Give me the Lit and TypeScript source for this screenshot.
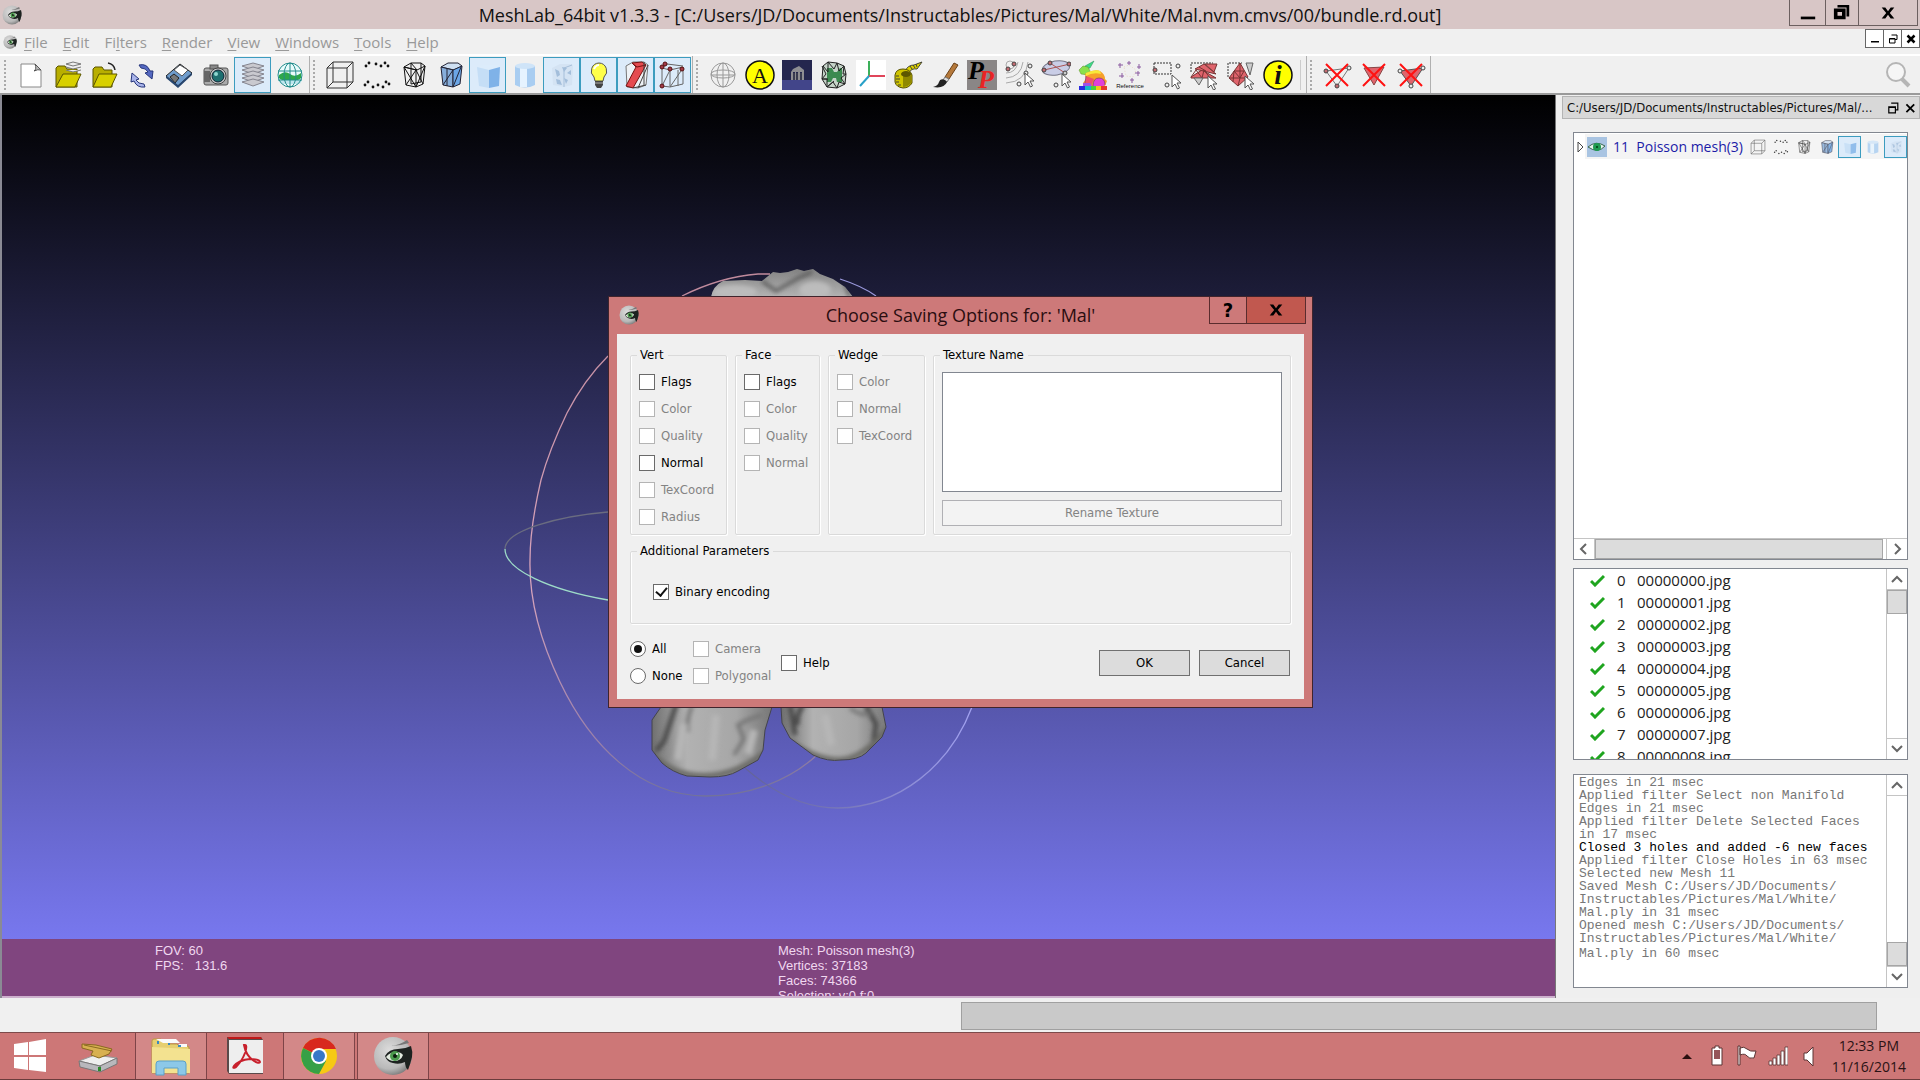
import { LitElement, html, svg, css, TemplateResult, SVGTemplateResult } from "lit";
import { customElement, property } from "lit/decorators.js";
import { classMap } from "lit/directives/class-map.js";

type Art = SVGTemplateResult;

const cursor = (x: number, y: number): Art => svg`
  <path d="M${x} ${y}v12l3-3 2.500 5 2-1-2.500-5h4z" fill="#fff" stroke="#555" stroke-width="1"/>`;
const dot = (x: number, y: number, fill = "#c46a70"): Art => svg`
  <circle cx="${x}" cy="${y}" r="2" fill="${fill}" stroke="#444" stroke-width="1"/>`;
const cross: Art = svg`<path d="M4 4l22 22M26 4L4 26" stroke="#f11" stroke-width="2" fill="none"/>`;

/* Toolbar drawings on a 30x30 grid */
const art: Record<string, Art> = {
  blank: svg`<path d="M5 4h14l6 6v17H5z" fill="#fff" stroke="#888"/><path d="M19 4q2 5-1 7 4-2 7-1z" fill="#bbb" stroke="#555"/>`,
  project: svg`
    <path d="M3 27V8l2-2h7l2 3h10v18z" fill="#b8ae00" stroke="#5a5500"/>
    <path d="M3 27l7-13h18l-6 13z" fill="#d8d000" stroke="#5a5500"/>
    <path d="M13 4l7-2 8 2-8 2zM13 7l7 2 8-2M13 10l7 2 8-2" fill="#eee" stroke="#777"/>`,
  folder: svg`
    <path d="M3 27V9l2-2h7l2 3h8v17z" fill="#b8ae00" stroke="#5a5500"/>
    <path d="M3 27l6-13h18l-6 13z" fill="#d8d000" stroke="#5a5500"/>
    <path d="M18 3q6 1 7 7" fill="none" stroke="#222" stroke-width="1.500"/>`,
  reload: svg`
    <path d="M12 5q8-2 11 6l3 0-1 8-7-6 3-1q-2-4-7-4z" fill="#5468c0" stroke="#26367c"/>
    <path d="M18 27q-8 1-11-6l-3 1 1-9 7 6-3 1q2 4 8 4z" fill="#a9b4ea" stroke="#26367c"/>`,
  save: svg`
    <path d="M2 16L16 4l12 9-14 13z" fill="#6f9ccc" stroke="#222"/>
    <path d="M10 10l6-5 8 5-6 6z" fill="#fff" stroke="#555"/>
    <path d="M6 17l4-3 5 4-4 5z" fill="#777" stroke="#222"/>
    <path d="M2 16l12 9 14-12v2L14 28 2 18z" fill="#27466f"/>`,
  camera: svg`
    <rect x="3" y="8" width="24" height="17" rx="2" fill="#aaa" stroke="#555"/>
    <rect x="9" y="5" width="8" height="4" fill="#888" stroke="#555"/>
    <rect x="3" y="11" width="6" height="11" fill="#666"/>
    <circle cx="17" cy="16" r="8" fill="#ccc" stroke="#444"/><circle cx="17" cy="16" r="6" fill="#1e6f70" stroke="#123"/>
    <circle cx="15" cy="14" r="2" fill="#8fd6d0"/>`,
  layers: svg`${[6, 10, 14, 18, 22].map((y) => svg`
    <path d="M4 ${y}l11-3 11 3-11 4z" fill="#c9c9cf" stroke="#85858f"/>`)}`,
  globe: svg`
    <circle cx="15" cy="15" r="12" fill="#e9fbfb"/>
    <path d="M4 15q6-5 11-1t11-1v5q-2 3-11 3T4 18z" fill="#2ea84a"/>
    <path d="M3 20h24l-2 4H6z" fill="#bfe6ee"/>
    <g fill="none" stroke="#228c8c"><circle cx="15" cy="15" r="12"/><ellipse cx="15" cy="15" rx="6" ry="12"/><path d="M3 11h24M3 20h24M15 3v24"/></g>`,
  bbox: svg`<path d="M2 8h20v20H2zM8 2h20v20H8zM2 8l6-6M22 8l6-6M2 28l6-6M22 28l6-6" fill="none" stroke="#333"/>`,
  points: svg`<g fill="#111">${[
    [4, 6], [7, 3], [14, 4], [19, 6], [23, 3], [26, 6], [3, 25], [6, 22], [11, 27], [16, 25], [21, 27], [24, 22], [27, 24]
  ].map(([x, y]) => svg`<circle cx="${x}" cy="${y}" r="1.400"/>`)}</g>`,
  wire: svg`<path d="M5 7l7-4h10l4 3-8 4zM5 7l2 18 10 2V10zM26 6l-2 18-7 3M7 25L17 10M5 7l12 20M17 10l7 14M26 6l-9 21M12 3v21M12 3l6 7M22 3v19M12 24l10-2" fill="none" stroke="#111"/>`,
  hidden: svg`
    <path d="M5 7l7-4h10l4 3-8 4z" fill="#cfe0f2" stroke="#223"/><path d="M5 7l2 18 10 2V10z" fill="#86aedb" stroke="#223"/>
    <path d="M26 6l-2 18-7 3V10z" fill="#6ba6e6" stroke="#223"/><path d="M7 25L17 10M11 8v18M17 27l8-20" fill="none" stroke="#223"/>`,
  flat: svg`
    <path d="M4 7l6-2h16l1 2-11 3z" fill="#dcecfb"/><path d="M4 7l12 3v18l-10-2z" fill="#c5def6"/><path d="M16 10l11-3-1 19-10 2z" fill="#7fb2e8"/>`,
  smooth: svg`
    <path d="M5 6v19q10 5 20 0V6z" fill="#a9cdf1"/><path d="M10 6v21h7V6z" fill="#e6f3ff"/><ellipse cx="15" cy="6" rx="10" ry="3" fill="#cfe4f8"/>`,
  texture: svg`
    <path d="M5 8l8-4h12l1 2-1 19-8 2-11-2z" fill="#d4e3f3"/>
    <path d="M8 9l4 2 1 4-3 2zM15 7l5 1-3 4zM20 13l4-3v5zM9 19l4 1 2 5-5-1zM17 18l4 2-2 4z" fill="#a3bedb"/><path d="M17 8l8-3M17 27V9" stroke="#a6bfda" fill="none"/>`,
  light: svg`
    <path d="M15 3a8 8 0 0 1 5 14l-1 4h-8l-1-4a8 8 0 0 1 5-14z" fill="#ffff4a" stroke="#555"/>
    <path d="M11 21h8v4l-2 3h-4l-2-3z" fill="#444"/><path d="M11 23h8" stroke="#aaa"/><path d="M10 9q2-4 5-4" fill="none" stroke="#fff" stroke-width="2"/>`,
  backface: svg`
    <path d="M5 6l7-4h11l4 3-2 20-8 3-11-1z" fill="#eef2f6" stroke="#777"/>
    <path d="M11 3l10-1 4 3-13 23-7-2L15 7z" fill="#e54b50" stroke="#711"/><path d="M11 3l5 4 9-2" fill="none" stroke="#711"/>
    <path d="M23 2v23M27 5l-10 23M12 28l13-3" fill="none" stroke="#444"/>`,
  edges: svg`
    <path d="M4 8l5-4 16 2M12 10v16M4 8v18l8 1 13-3V7l-13 3zM4 26l8-16M12 27L25 8M20 10v16" fill="none" stroke="#666"/>
    ${[[4, 7], [7, 4], [12, 9], [24, 9], [4, 26]].map(([x, y]) => svg`<circle cx="${x}" cy="${y}" r="2" fill="#a33a48" stroke="#511"/>`)}`,
  trackball: svg`<g fill="none" stroke="#999"><circle cx="15" cy="15" r="12"/><ellipse cx="15" cy="15" rx="6" ry="12"/><ellipse cx="15" cy="14" rx="12" ry="4"/><path d="M3 15h24M15 3v24"/></g>`,
  letterA: svg`<circle cx="15" cy="15" r="14" fill="#ff0" stroke="#111" stroke-width="1.500"/><text x="15" y="23" text-anchor="middle" font-family="Liberation Serif, serif" font-size="22" fill="#111">A</text>`,
  temple: svg`<rect width="30" height="30" fill="#24264e"/><path d="M0 20h30v10H0z" fill="#42458a"/>
    <path d="M9 12l2-3 6-3 5 4v2z" fill="#8e8e92"/><path d="M9 12h2v8H9zM13 12h1v8h-1zM16 12h2v8h-2zM20 12h2v8h-2z" fill="#8e8e92"/><path d="M11 13h2v7h-2zM14 13h2v7h-2zM18 13h2v7h-2z" fill="#3a3c50"/>`,
  mesh: svg`<path d="M4 6l5-4 9 1 7 3 2 8-1 10-8 4-10-1-5-8z" fill="#c6d4c9" stroke="#222"/>
    <path d="M8 8h5l2 4h3l3-4h2v14h-5l-1-4h-3l-2 4H8z" fill="#3c8a50"/>
    <path d="M4 6l5 6 0-10 6 7 3-6 2 8 5-5-1 8 3 0-5 4 4 6-6-2-2 6-4-6-6 5 0-8-5 0 4-5-4-8M8 27l7-6M3 19l6 0" fill="none" stroke="#222"/>`,
  axes: svg`<rect width="30" height="30" fill="#fff"/><path d="M13 16V1" stroke="#3cb05a" stroke-width="2"/><path d="M13 16h16" stroke="#e0455a" stroke-width="2"/><path d="M13 16L4 26" stroke="#28a0c8" stroke-width="2"/>`,
  tape: svg`
    <path d="M12 11q3-6 9-6l8-3-5 7q-6-1-8 4z" fill="#ddd200" stroke="#443"/><path d="M17 6l2 3M20 5l2 3M23 4l1 3" stroke="#443"/>
    <path d="M2 15q1-6 8-6t9 6v8q-3 5-9 5-7-1-8-6z" fill="#cfc400" stroke="#554f00"/>
    <path d="M10 14q6-2 8 2v7q-3 4-8 4z" fill="#8f8800"/><ellipse cx="13" cy="14" rx="5" ry="3" fill="#5c5700"/><path d="M3 16h3M3 19h4M3 22h3M5 25h3" stroke="#443"/>`,
  brush: svg`<path d="M24 3l4 2-9 14-4-2z" fill="#b5793b" stroke="#6b4118"/><path d="M15 17l4 2-2 3-4-2z" fill="#ddd" stroke="#777"/><path d="M3 27q5-1 6-5t6-2l2 2q-3 7-14 5z" fill="#222"/>`,
  pp: svg`<rect width="30" height="30" fill="#8a8686"/>
    <text x="1" y="19" font-family="Liberation Serif, serif" font-size="26" font-weight="700" font-style="italic" fill="#000">P</text>
    <text x="11" y="28" font-family="Liberation Serif, serif" font-size="26" font-weight="700" font-style="italic" fill="#e82424">P</text>`,
  georef: svg`<g fill="none" stroke="#aaa"><circle cx="6" cy="5" r="4"/><path d="M2 13q10 0 12-11M2 18Q17 17 19 2M2 23Q22 22 24 2"/></g>
    ${dot(10, 4)}${dot(4, 9)}${dot(26, 6, "#eee")}${dot(22, 13, "#eee")}${dot(15, 24, "#eee")}${cursor(21, 13)}`,
  plane: svg`<ellipse cx="15" cy="8" rx="14" ry="7" transform="rotate(-10 15 8)" fill="#c9cde6" stroke="#778"/><path d="M3 10L29 4M9 3l15 10" stroke="#a55"/>
    ${dot(9, 3)}${dot(3, 10)}${dot(28, 4)}${dot(24, 13, "#ccc")}${dot(15, 25, "#eee")}${cursor(21, 14)}`,
  bunny: svg`
    <path d="M7 6l9-5-4 7-4 1z" fill="#3ddc84" stroke="#2a8a5a" stroke-width=".5"/>
    <path d="M1 10l4-4 5 1 2 4-2 4-7-1z" fill="#8be04a" stroke="#5a8a2a" stroke-width=".5"/>
    <path d="M8 13q9-4 14-2 5 3 5 8l2 2-2 5H6l-1-3 3-4-1-5z" fill="#f6a02a"/>
    <path d="M8 13q9-4 14-2l1 3q-8-2-15 2z" fill="#f8e83a"/><path d="M8 16l-1 8 6 2 3-7z" fill="#f0506a"/>
    <path d="M15 26q0-8 6-8t6 7l-2 1z" fill="#e040d8"/><path d="M5 23h7l2 3H5z" fill="#a050e8"/>
    <path d="M15 26q0-8 6-8t6 7M8 16l-1 7" fill="none" stroke="#803a6a" stroke-width=".7"/>
    <path d="M1 26h6v4H1z" fill="#2a2ae0"/><path d="M7 26h6v4H7z" fill="#18b8c8"/><path d="M13 26h5v4h-5z" fill="#4ad03a"/><path d="M18 26h5v4h-5z" fill="#f4c81a"/><path d="M23 26h6v4h-6z" fill="#e83a2a"/>`,
  reference: svg`<path d="M5 3v5M3 5h5M14 1v4M12 3h4M24 4v5M22 7h4M7 13v5M4 16h5M23 11v5M20 13h5M17 18v5M15 20h4" stroke="#8a5aa0" fill="none"/>
    <path d="M9 7l5-2 7 5-3 7-7-1z" fill="none" stroke="#e8d8c0" stroke-dasharray="1 2"/>
    <text x="15" y="28" text-anchor="middle" font-family="Liberation Sans, sans-serif" font-size="6" fill="#111">Reference</text>`,
  selvert: svg`<rect x="2" y="3" width="17" height="11" fill="none" stroke="#333" stroke-dasharray="2 1"/>${dot(3, 10)}${dot(26, 6, "#eee")}${dot(15, 25, "#eee")}${cursor(20, 15)}`,
  selface: svg`<path d="M2 12V3h22" fill="none" stroke="#333" stroke-dasharray="2 1"/>
    <path d="M2 17l11-7 14 8H2z" fill="#e0646c" stroke="#733"/><path d="M6 9l9-5 12 10z" fill="#e0646c" stroke="#733"/><path d="M16 4h12l-3 8z" fill="#e0646c" stroke="#733"/>
    <path d="M2 17l5-7 6 8 2-8 6 8M10 7l7 4" stroke="#733" fill="none"/><path d="M5 18h9l-4 7z" fill="#ccc" stroke="#666"/>${cursor(19, 16)}`,
  selconn: svg`<path d="M2 17V3h14" fill="none" stroke="#333" stroke-dasharray="2 1"/>
    <path d="M14 3l8 14-10 9-9-8z" fill="#e0646c" stroke="#733"/><path d="M14 3v15l-2 8M3 18h18M8 11l6 7 4-7zM8 11l-1 11" stroke="#733" fill="none"/><path d="M20 3h7l-3 12z" fill="#ccc" stroke="#666"/>${cursor(19, 16)}`,
  info: svg`<circle cx="15" cy="15" r="14" fill="#ff0" stroke="#111" stroke-width="1.500"/><text x="15" y="24" text-anchor="middle" font-family="Liberation Serif, serif" font-size="27" font-weight="700" font-style="italic" fill="#111">i</text>`,
  delvert: svg`<path d="M4 11l11 15L27 8z" fill="none" stroke="#777"/>${cross}${dot(4, 11)}${dot(15, 26)}${dot(27, 8, "#eee")}`,
  delface: svg`<path d="M5 8l20-1-10 18z" fill="#e0646c" stroke="#844"/>${cross}`,
  delboth: svg`<path d="M4 11L27 8 15 26z" fill="#e0646c" stroke="#555"/>${cross}${dot(4, 11, "#eee")}${dot(15, 26, "#eee")}${dot(27, 8, "#eee")}`
};

const icon = (name: string, cls = "ico") => html`<svg class=${cls} viewBox="0 0 30 30" aria-hidden="true">${art[name]}</svg>`;

const eye = (cls: string): TemplateResult => html`
  <svg class=${cls} viewBox="0 0 40 40" aria-hidden="true">
    <defs>
      <radialGradient id="ball" cx=".4" cy=".35" r=".7"><stop offset="0" stop-color="#dcdcdc"/><stop offset=".7" stop-color="#b9b9b9"/><stop offset="1" stop-color="#777"/></radialGradient>
    </defs>
    <circle cx="20" cy="20" r="19" fill="url(#ball)"/>
    <path d="M18 10q9-1 16-6l2 3q-9 3-18 3z" fill="#777"/>
    <path d="M12 20q4-7 13-7 7 0 13-3 2 6 1 11-2 8-4 13-3-3-3-8-6 3-12 1-6-1-8-7z" fill="#1d2220"/>
    <path d="M13 21q4-5 10-5 5 0 7 3-2 6-9 6-5 0-8-4z" fill="#e3ebe0"/>
    <circle cx="22" cy="20" r="5" fill="#4c9a4e"/><circle cx="22" cy="20" r="2" fill="#0c1a0e"/><circle cx="24" cy="18" r="1" fill="#fff"/>
  </svg>`;

const glyph = {
  min: svg`<path d="M2 14h16v3H2z"/>`,
  restore: svg`<path d="M5 1h13v13h-3V4H5zM1 5h13v12H1zM5 9v4h5V9z" fill-rule="evenodd"/>`,
  close: svg`<path d="M3 4h4l3 4 3-4h4l-5 6 5 6h-4l-3-4-3 4H3l5-6z"/>`
};
const mark = (g: Art, cls: string) => html`<svg class=${cls} viewBox="0 0 20 20" aria-hidden="true">${g}</svg>`;

const base = css`
  * { box-sizing: border-box; }
  button { font: inherit; color: inherit; margin: 0; padding: 0; border: 0; background: none; }
  svg { display: block; flex: none; }
`;

@customElement("tool-strip")
class ToolStrip extends LitElement {
  static styles = [base, css`
    :host { display: flex; height: 41px; background: #f0f0f0; border-top: 2px solid #fff; border-bottom: 2px solid #9a9a9a; }
    .group { display: flex; align-items: center; border-left: 1px solid #b0b0b0; margin-right: 1px; }
    .group:first-of-type { border-left-color: #f0f0f0; }
    .grip { width: 11px; height: 32px; background: radial-gradient(circle, #aaa 1px, transparent 1px) 2px 0 / 4px 4px repeat-y; }
    .tool { width: 37px; height: 36px; display: grid; place-items: center; border: 1px solid transparent; }
    .on { background: #dcebfa; border-color: #3c9cbf; }
    .ico { width: 30px; height: 30px; }
    .tail { width: 9px; height: 30px; background: linear-gradient(#ccc, #ccc) 4px 0 / 1px 100% no-repeat; }
    .end { flex: 1; border-left: 1px solid #b0b0b0; display: flex; align-items: center; justify-content: flex-end; padding-right: 8px; }
    .find { width: 28px; height: 28px; }
  `];
  groups: { names: string[]; on?: string[]; tail?: boolean }[] = [
    { names: ["blank", "project", "folder", "reload", "save", "camera", "layers", "globe"], on: ["layers"] },
    { names: ["bbox", "points", "wire", "hidden", "flat", "smooth", "texture", "light", "backface", "edges"], on: ["flat", "texture", "light", "backface", "edges"] },
    { names: ["trackball", "letterA", "temple", "mesh", "axes", "tape", "brush", "pp", "georef", "plane", "bunny", "reference", "selvert", "selface", "selconn", "info"], tail: true },
    { names: ["delvert", "delface", "delboth"] }
  ];
  render() {
    return html`
      ${this.groups.map((g) => html`
        <div class="group"><span class="grip"></span>
          ${g.names.map((n) => html`<button class=${classMap({ tool: true, on: !!g.on?.includes(n) })} aria-label=${n}>${icon(n)}</button>`)}
          ${g.tail ? html`<span class="tail"></span>` : ""}
        </div>`)}
      <div class="end"><button aria-label="Search">
        <svg class="find" viewBox="0 0 28 28"><circle cx="12" cy="11" r="9" fill="#f6f6f6" stroke="#b5b5b5" stroke-width="2"/><path d="M18 18l7 7" stroke="#b5b5b5" stroke-width="4"/></svg>
      </button></div>`;
  }
}

@customElement("scroll-bar")
class ScrollBar extends LitElement {
  @property({ type: Boolean, reflect: true }) horizontal = false;
  @property({ type: Number }) before = 0;
  @property({ type: Number }) thumb = 0;
  @property({ type: Number }) after = 0;
  static styles = [base, css`
    :host { display: flex; flex-direction: column; width: 21px; flex: none; background: #fff; border-left: 1px solid #c4c4c4; }
    :host([horizontal]) { flex-direction: row; width: auto; height: 21px; border-left: 0; border-top: 1px solid #c4c4c4; }
    .end { flex: none; width: 20px; height: 21px; display: grid; place-items: center; border: 0 solid #c4c4c4; border-width: 0 0 1px; }
    .end:last-child { border-width: 1px 0 0; }
    :host([horizontal]) .end { height: 20px; width: 21px; border-width: 0 1px 0 0; }
    :host([horizontal]) .end:last-child { border-width: 0 0 0 1px; }
    .arrow { width: 12px; height: 12px; fill: none; stroke: #666; stroke-width: 2; }
    .thumb { background: #dcdcdc; border: 1px solid #a6a6a6; }
  `];
  render() {
    const h = this.horizontal;
    return html`
      <button class="end" aria-label="Back"><svg class="arrow" viewBox="0 0 12 12"><path d=${h ? "M8 1L3 6l5 5" : "M1 9l5-5 5 5"} /></svg></button>
      <span style="flex:${this.before} 1 0"></span>
      <span class="thumb" style="flex:${this.thumb} 1 0"></span>
      <span style="flex:${this.after} 1 0"></span>
      <button class="end" aria-label="Forward"><svg class="arrow" viewBox="0 0 12 12"><path d=${h ? "M4 1l5 5-5 5" : "M1 3l5 5 5-5"} /></svg></button>`;
  }
}

@customElement("mesh-view")
class MeshView extends LitElement {
  static styles = [base, css`
    :host { display: flex; flex-direction: column; justify-content: flex-end; position: relative; overflow: hidden; min-width: 0; min-height: 0;
      background: linear-gradient(#000, #8080ff); border-left: 2px solid #8a8a94; border-right: 1px solid #777; }
    .scene { position: absolute; left: -2px; top: 0; width: 100%; height: 100%; }
    .info { position: relative; height: 59px; overflow: hidden; background: #80457f; border-bottom: 2px solid #cdb0cd; padding: 4px 0 0 153px;
      display: grid; grid-template-columns: 623px 1fr; font: 13px/15px "Liberation Sans", sans-serif; color: #f0d8f0; white-space: pre; }
    .col { height: 60px; }
  `];
  render() {
    return html`
      <svg class="scene" viewBox="0 95 1556 903" preserveAspectRatio="xMinYMin slice">
        <defs>
          <linearGradient id="stone" x1="0" y1="0" x2="1" y2="0"><stop offset="0" stop-color="#6c6c6c"/><stop offset=".3" stop-color="#b2b2b2"/><stop offset=".7" stop-color="#a6a6a6"/><stop offset="1" stop-color="#747474"/></linearGradient>
          <linearGradient id="head" x1="0" y1="0" x2="0" y2="1"><stop offset="0" stop-color="#7c7c7c"/><stop offset="1" stop-color="#b8b8b8"/></linearGradient>
          <linearGradient id="ringA" x1="0" y1="0" x2="0" y2="1"><stop offset="0" stop-color="#c08a9c"/><stop offset=".6" stop-color="#d8a4bc"/><stop offset=".9" stop-color="#9a80a8"/><stop offset="1" stop-color="#72729a"/></linearGradient>
          <linearGradient id="ringB" x1="0" y1="0" x2="1" y2="0"><stop offset="0" stop-color="#62629a"/><stop offset=".5" stop-color="#7c7cc0"/><stop offset="1" stop-color="#a2a2f0"/></linearGradient>
          <filter id="soft"><feGaussianBlur stdDeviation="2"/></filter>
          <clipPath id="feet"><path d="M661 707L652 720V750L662 763Q672 772 687 776L710 777Q728 777 738 771L758 760 763 750 765 730 772 707zM781 707L782 723 790 738 813 755Q828 762 841 760 858 760 866 753L882 737 886 727 882 707z"/></clipPath>
          <clipPath id="top"><path d="M711 297Q713 286 723 281L745 280 762 281 773 272 780 273 788 272 797 269 804 271 813 269 820 274 833 279 845 287 853 297z"/></clipPath>
        </defs>
        <g fill="none" stroke-width="1.300">
          <path stroke="url(#ringA)" d="M682 296Q720 277 758 274H770M817 755C790 780 750 796 706 796 640 796 590 745 560 682 540 640 529 600 530 560 530 540 534 510 541 480 547 458 554 440 567 413 580 388 592 372 608 356"/>
          <path stroke="#9a98dc" d="M840 279Q862 286 876 296"/>
          <path stroke="url(#ringB)" d="M972 707C950 765 900 807 838 808 800 808 770 790 745 768"/>
          <path stroke="#6a6c80" d="M608 512C560 516 505 530 505 549"/>
          <path stroke="#9edcc8" d="M505 549C505 570 550 590 608 600"/>
        </g>
        <g clip-path="url(#top)">
          <rect x="705" y="265" width="150" height="35" fill="url(#head)"/>
          <g filter="url(#soft)"><ellipse cx="735" cy="292" rx="22" ry="7" fill="#bcbcbc"/><ellipse cx="815" cy="290" rx="16" ry="9" fill="#bcbcbc"/>
          <path d="M762 281l14 10 24-14 12-5M845 284l5 13" stroke="#555" stroke-width="3" fill="none"/></g>
        </g>
        <g clip-path="url(#feet)">
          <rect x="650" y="700" width="124" height="80" fill="url(#stone)"/><rect x="780" y="700" width="110" height="65" fill="url(#stone)"/>
          <g filter="url(#soft)" fill="none"><path d="M676 705l-12 36-8 10M790 705l5 30M803 705q-8 12-5 20M866 706l10 18-4 30" stroke="#4c4c4c" stroke-width="5"/>
          <path d="M692 706q-6 14-4 26M762 715q-14 4-24 10l6 14-10 16M850 708q10 8 20 6" stroke="#777" stroke-width="4"/>
          <path d="M652 754q20 22 52 22t62-24M790 742q30 20 52 18t46-32" stroke="#6a6a66" stroke-width="6"/>
          <path d="M684 724l-6 36M716 715l-4 45M825 715l6 30M754 730l-6 24" stroke="#b6b6b6" stroke-width="8"/></g>
        </g>
        <path d="M652 750L662 763Q672 772 687 776L710 777Q728 777 738 771L758 760 763 750 765 730 772 707M781 707L782 723 790 738 813 755Q828 762 841 760 858 760 866 753L882 737 886 727 882 707M661 707L652 720V750" fill="none" stroke="#44444c"/>
      </svg>
      <div class="info"><div class="col">FOV: 60
FPS:   131.6</div><div class="col">Mesh: Poisson mesh(3)
Vertices: 37183
Faces: 74366
Selection: v:0 f:0</div></div>`;
  }
}

@customElement("side-dock")
class SideDock extends LitElement {
  static styles = [base, css`
    :host { display: flex; flex-direction: column; min-width: 0; min-height: 0; background: #efefef; padding: 1px 0 10px 6px; font: 15px/22px "Open Sans", "Noto Sans", sans-serif; }
    .bar { display: flex; align-items: center; height: 23px; padding: 0 3px 0 4px; background: #d8d8d8; border: 1px solid #b4b4b4; font: 13px/21px "DejaVu Sans Condensed", "DejaVu Sans", sans-serif; color: #111; margin-bottom: 13px; }
    .path { flex: 1; min-width: 0; white-space: nowrap; }
    .mini { width: 12px; height: 12px; margin-left: 5px; }
    .box { margin: 0 12px 8px 11px; border: 1px solid #828790; background: #fff; min-height: 0; }
    .tree { flex: 1; display: flex; flex-direction: column; }
    .node { display: flex; align-items: center; height: 25px; padding-left: 3px; margin-top: 1px; }
    .twist { width: 8px; height: 12px; }
    .row { flex: 1; height: 25px; display: flex; align-items: center; background: #f4f4f4; padding-left: 2px; color: #1c1ca8; }
    .eye { width: 20px; height: 20px; background: #a9c4e2; }
    .name { flex: 1; padding-left: 6px; white-space: nowrap; font-size: 14px; }
    .tool { width: 23px; height: 22px; display: grid; place-items: center; border: 1px solid transparent; }
    .on { background: #dcebfa; border-color: #3c9cbf; }
    .ico { width: 16px; height: 16px; opacity: .8; }
    .fill { flex: 1; }
    .list { height: 192px; display: flex; overflow: hidden; margin-bottom: 14px; }
    .items { flex: 1; margin: 0; padding: 0 0 0 16px; list-style: none; }
    .item { display: flex; align-items: center; height: 22px; color: #222; }
    .tick { width: 15px; height: 13px; }
    .num { width: 20px; margin-left: 12px; }
    .log { height: 214px; display: flex; margin-bottom: 0; }
    .lines { flex: 1; margin: 0; padding: 1px 0 0 5px; font: 13px/13px "Liberation Mono", monospace; color: #777; }
    .strong { color: #000; }
    .last { display: block; padding-top: 2px; }
  `];
  render() {
    const files = [0, 1, 2, 3, 4, 5, 6, 7, 8];
    const tools = ["bbox", "points", "wire", "hidden", "flat", "smooth", "texture"];
    return html`
      <div class="bar"><span class="path">C:/Users/JD/Documents/Instructables/Pictures/Mal/...</span>
        <button aria-label="Float">${mark(svg`<path d="M7 2h11v11h-4M3 8h11v10H3zM3 9h11" fill="none" stroke="#000" stroke-width="2"/>`, "mini")}</button>
        <button aria-label="Close dock">${mark(svg`<path d="M4 4l13 13M17 4L4 17" stroke="#000" stroke-width="3"/>`, "mini")}</button>
      </div>
      <div class="box tree">
        <div class="node"><svg class="twist" viewBox="0 0 8 12"><path d="M1 1l5 5-5 5z" fill="#fff" stroke="#444"/></svg>
          <div class="row">
            <svg class="eye" viewBox="0 0 20 20"><path d="M1 10q8-7 17-1-7 8-17 1z" fill="#e8f4ee" stroke="#3a6650"/><circle cx="10" cy="10" r="4" fill="#1e9a50"/><circle cx="10" cy="10" r="1" fill="#031"/></svg>
            <span class="name">11&nbsp; Poisson mesh(3)</span>
            ${tools.map((n) => html`<button class=${classMap({ tool: true, on: n === "flat" || n === "texture" })} aria-label=${n}>${icon(n)}</button>`)}
          </div>
        </div>
        <div class="fill"></div>
        <scroll-bar horizontal .before=${0} .thumb=${290} .after=${3}></scroll-bar>
      </div>
      <div class="box list">
        <ul class="items">${files.map((n) => html`<li class="item">
          <svg class="tick" viewBox="0 0 15 13"><path d="M1 7l4 4 9-9" fill="none" stroke="#1fa51f" stroke-width="3"/></svg>
          <span class="num">${n}</span><span>0000000${n}.jpg</span></li>`)}</ul>
        <scroll-bar .before=${0} .thumb=${22} .after=${127}></scroll-bar>
      </div>
      <div class="box log">
        <pre class="lines">Edges in 21 msec
Applied filter Select non Manifold
Edges in 21 msec
Applied filter Delete Selected Faces
in 17 msec
<span class="strong">Closed 3 holes and added -6 new faces</span>
Applied filter Close Holes in 63 msec
Selected new Mesh 11
Saved Mesh C:/Users/JD/Documents/
Instructables/Pictures/Mal/White/
Mal.ply in 31 msec
Opened mesh C:/Users/JD/Documents/
Instructables/Pictures/Mal/White/
<span class="last">Mal.ply in 60 msec</span></pre>
        <scroll-bar .before=${149} .thumb=${22} .after=${0}></scroll-bar>
      </div>`;
  }
}

interface Opt { label: string; off?: boolean; checked?: boolean; }

@customElement("save-dialog")
class SaveDialog extends LitElement {
  static styles = [base, css`
    :host { display: block; background: #cd7979; border: 1px solid #40242c; padding: 0 8px 8px; font: 13px/16px "DejaVu Sans Condensed", "DejaVu Sans", sans-serif; color: #000; }
    .head { display: flex; height: 37px; align-items: flex-start; }
    .logo { width: 20px; height: 20px; margin: 8px 0 0 2px; }
    .title { flex: 1; margin: 0; padding-left: 73px; text-align: center; font-family: "Open Sans", "Noto Sans", sans-serif; font-size: 18px; font-weight: 400; line-height: 37px; color: #2a0d10; }
    .help, .shut { height: 27px; border: 1px solid #5a2c2e; border-top: 0; display: grid; place-items: center; }
    .help { width: 37px; border-right: 0; font-size: 20px; font-weight: 700; line-height: 24px; }
    .shut { width: 60px; background: #c1584f; margin-right: -2px; }
    .x { width: 18px; height: 18px; }
    .body { background: #f0f0f0; padding: 13px 13px 15px; }
    .grid { display: grid; grid-template-columns: 97px 85px 97px 1fr; gap: 8px; }
    fieldset { margin: 0; min-width: 0; border: 1px solid #dadada; border-radius: 2px; box-shadow: inset 1px 0 #fff, 1px 1px #fff; padding: 11px 8px 9px; display: flex; flex-direction: column; gap: 11px; }
    legend { padding: 0 4px 0 3px; margin-left: -2px; line-height: 16px; white-space: nowrap; }
    .names { gap: 8px; padding-top: 9px; padding-bottom: 8px; }
    .textures { flex: 1; margin: 0; border: 1px solid #828790; background: #fff; }
    .wide { grid-column: 1 / -1; padding: 25px 22px 23px; }
    .wide legend { margin-left: -16px; }
    .opt { display: flex; align-items: center; gap: 6px; height: 16px; white-space: nowrap; }
    .off { color: #838383; }
    input { appearance: none; flex: none; width: 16px; height: 16px; margin: 0; border: 1px solid #6a6a6a; background: #fff; display: grid; place-items: center; }
    input:disabled { border-color: #b4b4b4; }
    input[type="checkbox"]:checked::after { content: ""; width: 5px; height: 9px; margin-top: -3px; border: solid #111; border-width: 0 2px 2px 0; rotate: 40deg; }
    input[type="radio"] { border-radius: 50%; }
    input[type="radio"]:checked::after { content: ""; width: 8px; height: 8px; border-radius: 50%; background: #111; }
    .foot { display: flex; align-items: center; margin-top: 17px; padding-right: 1px; }
    .pair { display: grid; gap: 11px; }
    .radios { width: 63px; }
    .kinds { width: 88px; }
    .gap { flex: 1; }
    .btn { height: 26px; border: 1px solid #707070; background: #dcdcdc; }
    .btn:disabled { border-color: #b0b0b4; background: #f3f3f3; color: #838383; }
    .act { width: 91px; margin-left: 9px; }
  `];
  opt(o: Opt, type = "checkbox") {
    return html`<label class=${classMap({ opt: true, off: !!o.off })}><input type=${type} name=${type === "radio" ? "range" : o.label} ?disabled=${!!o.off} ?checked=${!!o.checked} />${o.label}</label>`;
  }
  render() {
    const off = (label: string): Opt => ({ label, off: true });
    const groups: [string, Opt[]][] = [
      ["Vert", [{ label: "Flags" }, off("Color"), off("Quality"), { label: "Normal" }, off("TexCoord"), off("Radius")]],
      ["Face", [{ label: "Flags" }, off("Color"), off("Quality"), off("Normal")]],
      ["Wedge", [off("Color"), off("Normal"), off("TexCoord")]]
    ];
    return html`
      <div class="head">${eye("logo")}<h2 class="title">Choose Saving Options for: 'Mal'</h2>
        <button class="help">?</button><button class="shut" aria-label="Close">${mark(glyph.close, "x")}</button></div>
      <div class="body">
        <div class="grid">
          ${groups.map(([t, os]) => html`<fieldset><legend>${t}</legend>${os.map((o) => this.opt(o))}</fieldset>`)}
          <fieldset class="names"><legend>Texture Name</legend>
            <div class="textures" role="listbox" aria-label="Texture Name"></div>
            <button class="btn" disabled>Rename Texture</button></fieldset>
          <fieldset class="wide"><legend>Additional Parameters</legend>${this.opt({ label: "Binary encoding", checked: true })}</fieldset>
        </div>
        <div class="foot">
          <div class="pair radios">${this.opt({ label: "All", checked: true }, "radio")}${this.opt({ label: "None" }, "radio")}</div>
          <div class="pair kinds">${this.opt(off("Camera"))}${this.opt(off("Polygonal"))}</div>
          ${this.opt({ label: "Help" })}
          <span class="gap"></span>
          <button class="btn act">OK</button><button class="btn act">Cancel</button>
        </div>
      </div>`;
  }
}

@customElement("task-bar")
class TaskBar extends LitElement {
  static styles = [base, css`
    :host { display: flex; height: 48px; align-items: stretch; background: #cd7777; border-top: 1px solid #7c4a4a; border-bottom: 1px solid #6a3c3c; font: 14px/21px "Open Sans", "Noto Sans", sans-serif; color: #2a1214; }
    .task { width: 74px; display: grid; place-items: center; border: 0 solid #7e4448; }
    .start { width: 60px; } .drive { width: 75px; }
    .open { background: #d38888; border-width: 0 1px; width: 72px; }
    .closed { width: 76px; }
    .next { margin-left: 2px; }
    .pic { width: 40px; height: 40px; }
    .gap { flex: 1; }
    .tray { display: flex; align-items: center; gap: 8px; padding-right: 14px; }
    .sym { width: 22px; height: 22px; }
    .clock { text-align: center; padding-left: 6px; }
    .line { display: block; }
  `];
  render() {
    return html`
      <button class="task start" aria-label="Start"><svg class="pic" viewBox="0 0 40 40"><path d="M4 8l14-2v13H4zM19 6l17-3v16H19zM4 21h14v13L4 32zM19 21h17v15l-17-2z" fill="#fff"/></svg></button>
      <button class="task drive" aria-label="Drive"><svg class="pic" viewBox="0 0 40 40">
        <path d="M1 25l16-6 22 3-17 8z" fill="#eee" stroke="#999"/><path d="M1 25l21 5v6L2 31zM39 22l-17 8v6l17-8z" fill="#b8b8bc" stroke="#777"/><path d="M20 31l3 0v4h-3z" fill="#2a8a2a"/>
        <path d="M4 8l14 1 16 4-3 5-10 4-8-3 2-4-11-3z" fill="#d8b050" stroke="#8a6a20"/><path d="M6 9l28 6" stroke="#8a6a20"/></svg></button>
      <button class="task open" aria-label="Explorer"><svg class="pic" viewBox="0 0 40 40">
        <path d="M1 37V5q0-2 2-2h7l2 3h4l2 2h8l2 2h8q2 0 2 2v25z" fill="#e6cf70" stroke="#b89a40"/><path d="M5 3h20l4 4H12zM28 8h8v3h-9z" fill="#fafafa"/><path d="M6 5h2v3H6zM17 7h2v2h-2zM27 9h3v2h-3z" fill="#3a8ac0"/>
        <path d="M1 37V11l38 2v24z" fill="#f3e290"/><path d="M5 39V28q0-3 3-3h24q3 0 3 3v11h-8v-7H13v7z" fill="#8cc8e8" stroke="#5aa0c8"/></svg></button>
      <button class="task closed" aria-label="Reader"><svg class="pic" viewBox="0 0 40 40">
        <path d="M2 1h34l2 3v34H4l-2-3z" fill="#5a4a4a"/><path d="M2 1h34l1 2H4z" fill="#c01818"/><rect x="4" y="4" width="34" height="33" fill="#eee"/>
        <path d="M19 9q4-1 1 8-3 8-9 14-4 2-2-1 5-6 16-7 10 0 10 3-1 2-6-1-8-5-10-16z" fill="none" stroke="#c8202c" stroke-width="2"/></svg></button>
      <button class="task open" aria-label="Chrome"><svg class="pic" viewBox="0 0 40 40">
        <circle cx="20" cy="20" r="18" fill="#f6c915"/><path d="M20 20L4 12A18 18 0 0 1 37 13H20z" fill="#d8281e"/><path d="M4 12A18 18 0 0 0 20 38l7-13-7-5z" fill="#36a046"/>
        <circle cx="20" cy="20" r="8" fill="#fff"/><circle cx="20" cy="20" r="6" fill="#3878c8"/></svg></button>
      <button class="task open next" aria-label="MeshLab">${eye("pic")}</button>
      <span class="gap"></span>
      <div class="tray">
        <svg class="sym" viewBox="0 0 22 22"><path d="M6 14l5-5 5 5z" fill="#2a1010"/></svg>
        <svg class="sym" viewBox="0 0 22 22"><path d="M9 3V1h4v2h3v17H6V3z" fill="#fff" stroke="#5a3434"/><path d="M8 5h6v9H8z" fill="#94565a"/></svg>
        <svg class="sym" viewBox="0 0 22 22"><path d="M2 1h2v19H2zM4 3q4-2 7 1t9 2l-2 7q-5 1-7-2t-7-1z" fill="#fff" stroke="#5a3434"/></svg>
        <svg class="sym" viewBox="0 0 22 22"><path d="M3 16h3v4H3zM7 13h3v7H7zM11 10h3v10h-3zM15 6h3v14h-3zM19 2h3v18h-3z" fill="#fff" stroke="#5a3434" stroke-width=".8"/></svg>
        <svg class="sym" viewBox="0 0 22 22"><path d="M8 8h3l6-6v19l-6-6H8z" fill="#fff" stroke="#5a3434"/></svg>
        <div class="clock"><span class="line">12:33 PM</span><span class="line">11/16/2014</span></div>
      </div>`;
  }
}

@customElement("app-root")
class AppRoot extends LitElement {
  static styles = [base, css`
    :host { display: grid; grid-template-rows: auto auto auto 1fr auto auto; min-height: 100vh; position: relative; overflow: hidden; background: #f0f0f0; font-family: "Open Sans", "Noto Sans", sans-serif; }
    .title { display: grid; grid-template-columns: 131px 1fr 131px; height: 29px; background: #d8c6c6; }
    .logo { width: 20px; height: 20px; margin: 5px 0 0 2px; }
    .caption { margin: 0; text-align: center; font-size: 18px; font-weight: 400; line-height: 30px; color: #111; white-space: nowrap; }
    .sys { display: flex; height: 26px; border: 1px solid #6c6060; border-top: 0; margin-right: 2px; }
    .sb { flex: 36; display: grid; place-items: center; }
    .sb + .sb { flex: 33; border-left: 1px solid #6c6060; }
    .sb + .big { flex: 59; }
    .g { width: 18px; height: 18px; }
    .menu { display: flex; height: 25px; align-items: flex-start; padding-left: 3px; font-size: 15px; line-height: 27px; color: #999; }
    .small { width: 14px; height: 14px; margin: 6px 7px 0 0; }
    .entry { margin-right: 15px; line-height: 27px; }
    u { text-underline-offset: 2px; }
    .mdi { margin-left: auto; display: flex; height: 19px; border: 1px solid #666; background: #fff; }
    .mb { width: 17px; display: grid; place-items: center; }
    .mb + .mb { width: 18px; border-left: 1px solid #666; }
    .m { width: 10px; height: 10px; }
    .main { display: grid; grid-template-columns: 1fr 364px; min-height: 0; }
    .status { height: 34px; padding: 4px 43px 2px 0; display: flex; justify-content: flex-end; }
    .progress { width: 916px; border: 1px solid #a0a0a0; background: #c9c9c9; }
    .dialog { position: absolute; top: 296px; left: calc(50% - 352px); width: 705px; }
  `];
  menu(s: string, at = 0) {
    return html`<button class="entry">${s.slice(0, at)}<u>${s[at]}</u>${s.slice(at + 1)}</button>`;
  }
  render() {
    return html`
      <header class="title">${eye("logo")}
        <h1 class="caption">MeshLab_64bit v1.3.3 - [C:/Users/JD/Documents/Instructables/Pictures/Mal/White/Mal.nvm.cmvs/00/bundle.rd.out]</h1>
        <div class="sys"><button class="sb" aria-label="Minimize">${mark(glyph.min, "g")}</button><button class="sb" aria-label="Restore">${mark(glyph.restore, "g")}</button><button class="sb big" aria-label="Close">${mark(glyph.close, "g")}</button></div>
      </header>
      <nav class="menu">${eye("small")}
        ${this.menu("File")}${this.menu("Edit")}${this.menu("Filters", 2)}${this.menu("Render")}${this.menu("View")}${this.menu("Windows")}${this.menu("Tools")}${this.menu("Help")}
        <div class="mdi"><button class="mb" aria-label="Minimize view">${mark(glyph.min, "m")}</button>
          <button class="mb" aria-label="Restore view">${mark(svg`<path d="M7 2h11v9h-4M3 9h11v9H3zM3 10h11" fill="none" stroke="#000" stroke-width="2"/>`, "m")}</button>
          <button class="mb" aria-label="Close view">${mark(svg`<path d="M3 3l14 14M17 3L3 17" stroke="#000" stroke-width="5"/>`, "m")}</button></div>
      </nav>
      <tool-strip></tool-strip>
      <main class="main"><mesh-view></mesh-view><side-dock></side-dock></main>
      <div class="status"><div class="progress"></div></div>
      <task-bar></task-bar>
      <save-dialog class="dialog" role="dialog" aria-label="Choose Saving Options"></save-dialog>`;
  }
}
